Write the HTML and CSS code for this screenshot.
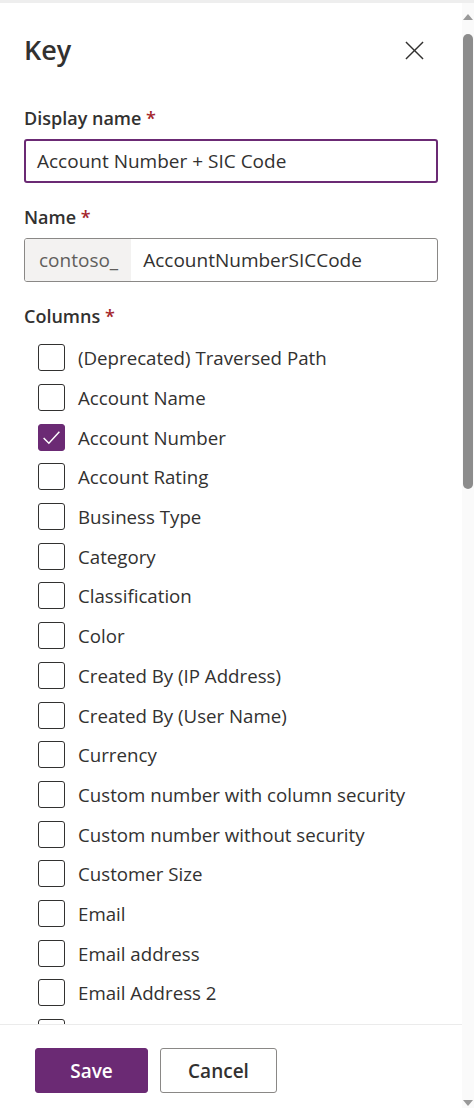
FILE: index.html
```html
<!DOCTYPE html>
<html lang="en">
<head>
    <meta charset="UTF-8">
    <meta name="viewport" content="width=device-width, initial-scale=1.0">
    <title>Key</title>
    <link rel="stylesheet" href="styles.css">
</head>
<body>
    <div class="topband"></div>
    <div class="frame">
        <div class="panel">
            <div class="scroll">
                <div class="header">
                    <h1>Key</h1>
                    <button class="close" aria-label="Close">
                        <svg width="19" height="19" viewBox="0 0 20 20"><path d="M1 1 L19 19 M19 1 L1 19" stroke="#323130" stroke-width="1.5" fill="none"/></svg>
                    </button>
                </div>

                <label class="field-label">Display name <span class="req">*</span></label>
                <div class="input focused">Account Number + SIC Code</div>

                <label class="field-label">Name <span class="req">*</span></label>
                <div class="input prefixed">
                    <span class="prefix">contoso_</span>
                    <span class="value">AccountNumberSICCode</span>
                </div>

                <label class="field-label">Columns <span class="req">*</span></label>
                <ul class="columns">
                    <li><span class="box"></span>(Deprecated) Traversed Path</li>
                    <li><span class="box"></span>Account Name</li>
                    <li class="checked"><span class="box"><svg width="21" height="21" viewBox="0 0 20 20"><path d="M2.5 10.5 L7.5 15.5 L17.5 4.5" stroke="#fff" stroke-width="1.4" fill="none"/></svg></span>Account Number</li>
                    <li><span class="box"></span>Account Rating</li>
                    <li><span class="box"></span>Business Type</li>
                    <li><span class="box"></span>Category</li>
                    <li><span class="box"></span>Classification</li>
                    <li><span class="box"></span>Color</li>
                    <li><span class="box"></span>Created By (IP Address)</li>
                    <li><span class="box"></span>Created By (User Name)</li>
                    <li><span class="box"></span>Currency</li>
                    <li><span class="box"></span>Custom number with column security</li>
                    <li><span class="box"></span>Custom number without security</li>
                    <li><span class="box"></span>Customer Size</li>
                    <li><span class="box"></span>Email</li>
                    <li><span class="box"></span>Email address</li>
                    <li><span class="box"></span>Email Address 2</li>
                    <li><span class="box"></span></li>
                </ul>
            </div>
            <div class="footer">
                <button class="btn primary">Save</button>
                <button class="btn">Cancel</button>
            </div>
        </div>
        <div class="scrollbar">
            <div class="arrow up"></div>
            <div class="thumb"></div>
            <div class="track"></div>
            <div class="arrow down"></div>
        </div>
    </div>
</body>
</html>
```

FILE: styles.css
```css
* {
    box-sizing: border-box;
}

html, body {
    margin: 0;
    height: 1108px;
    overflow: hidden;
}

body {
    font-family: "Segoe UI", "Open Sans", "Noto Sans", sans-serif;
    color: #323130;
    background: #fff;
    display: flex;
    flex-direction: column;
}

.topband {
    height: 3px;
    background: #eeeeee;
}

.frame {
    flex: 1;
    display: flex;
    min-height: 0;
}

.panel {
    flex: 1;
    display: flex;
    flex-direction: column;
    min-width: 0;
}

.scroll {
    flex: 1;
    overflow: hidden;
    padding: 27px 0 0 24px;
    min-height: 0;
}

.header {
    display: flex;
    justify-content: space-between;
    align-items: center;
    height: 40px;
    padding-right: 38px;
}

h1 {
    margin: 0;
    font-size: 27px;
    font-weight: 600;
    line-height: 40px;
}

.close {
    border: none;
    background: none;
    padding: 0;
    width: 19px;
    height: 19px;
    display: flex;
}

.field-label {
    display: block;
    font-size: 18px;
    font-weight: 600;
    line-height: 26px;
    margin-top: 35px;
    margin-bottom: 8px;
}

.req {
    color: #a4262c;
}

.input {
    width: 414px;
    height: 44px;
    border: 1px solid #8a8886;
    border-radius: 3px;
    font-size: 19px;
    display: flex;
    align-items: center;
    padding-left: 12px;
}

.input.focused {
    border: 2px solid #6b2a74;
    padding-left: 11px;
}

.input + .field-label {
    margin-top: 21px;
}

.prefixed {
    padding-left: 0;
    overflow: hidden;
}

.prefix {
    background: #f3f2f1;
    color: #605e5c;
    height: 100%;
    display: flex;
    align-items: center;
    padding: 0 13px 0 14px;
}

.value {
    padding-left: 12px;
}

.columns {
    list-style: none;
    margin: 9px 0 0;
    padding: 0 0 0 14px;
}

.columns li {
    height: 39.7px;
    display: flex;
    align-items: center;
    font-size: 18.7px;
}

.box {
    width: 27px;
    height: 27px;
    border: 1.5px solid #323130;
    border-radius: 3px;
    margin-right: 13px;
    display: flex;
    align-items: center;
    justify-content: center;
    flex-shrink: 0;
}

.checked .box {
    background: #6b2a74;
    border-color: #6b2a74;
}

.footer {
    height: 84px;
    border-top: 1px solid #ebebeb;
    padding: 23px 0 0 35px;
    display: flex;
    gap: 12px;
    align-items: flex-start;
}

.btn {
    font-family: inherit;
    font-size: 19px;
    font-weight: 600;
    height: 45px;
    width: 117px;
    border: 1px solid #8a8886;
    border-radius: 3px;
    background: #fff;
    color: #323130;
}

.btn.primary {
    width: 113px;
    background: #6b2a74;
    border-color: #6b2a74;
    color: #fff;
}

.scrollbar {
    width: 12px;
    display: flex;
    flex-direction: column;
    align-items: center;
    background: #fafafa;
}

.arrow {
    width: 0;
    height: 0;
    border-left: 5px solid transparent;
    border-right: 5px solid transparent;
}

.arrow.up {
    border-bottom: 6px solid #999;
    margin-top: 11px;
}

.arrow.down {
    border-top: 6px solid #999;
    margin-bottom: 2px;
}

.thumb {
    width: 10px;
    height: 455px;
    margin-top: 14px;
    background: #8c8c8c;
    border-radius: 5px;
}

.track {
    flex: 1;
}
```
